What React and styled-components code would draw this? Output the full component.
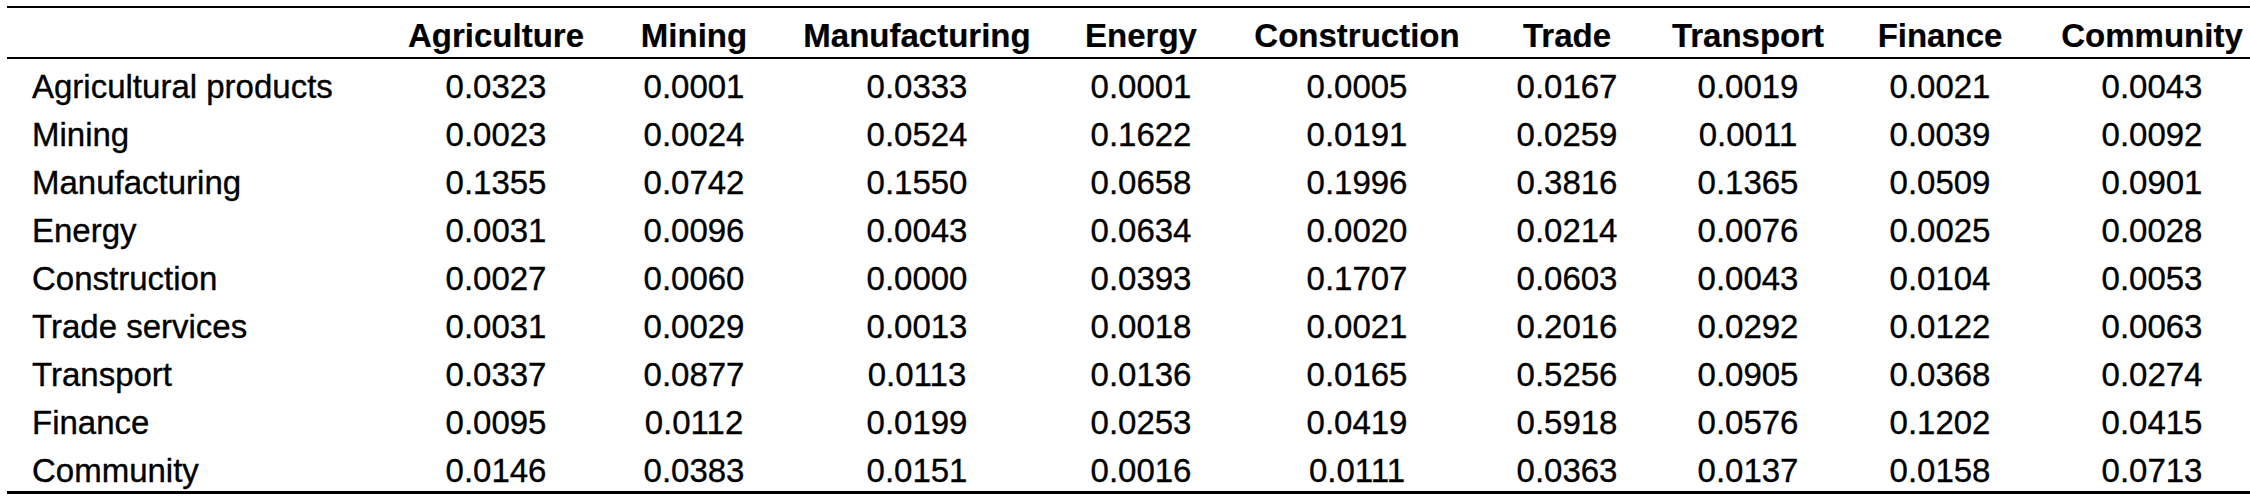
import React from 'react';
import styled, { createGlobalStyle } from 'styled-components';

const GlobalStyle = createGlobalStyle`
  html, body {
    margin: 0;
    padding: 0;
    background: #fff;
    overflow: hidden;
  }
  body {
    font-family: 'Liberation Sans', Arial, Helvetica, sans-serif;
    color: #000;
  }
`;

const Table = styled.div`
  margin: 6px 0 0 7px;
  width: 2274px;
  border-top: 2px solid #000;
  border-bottom: 3px solid #000;
`;

const Row = styled.div`
  display: grid;
  grid-template-columns: 368px 242px 154px 292px 156px 276px 144px 218px 166px 258px;
  height: ${(p) => (p.$head ? '49px' : '48px')};
  border-bottom: ${(p) => (p.$head ? '2px solid #000' : 'none')};
  font-size: 33px;
  line-height: 36px;
  font-weight: ${(p) => (p.$head ? 700 : 400)};
  -webkit-text-stroke: ${(p) => (p.$head ? '0.2px' : '0.35px')} #000;
`;

const Cell = styled.div`
  padding-top: ${(p) => (p.$head ? '9.5px' : '10px')};
  padding-left: ${(p) => (p.$label ? '25px' : '0')};
  text-align: ${(p) => (p.$label ? 'left' : 'center')};
  white-space: nowrap;
`;

const columns = [
    'Agriculture', 'Mining', 'Manufacturing', 'Energy', 'Construction',
    'Trade', 'Transport', 'Finance', 'Community',
];

const rows = [
    ['Agricultural products', '0.0323', '0.0001', '0.0333', '0.0001', '0.0005', '0.0167', '0.0019', '0.0021', '0.0043'],
    ['Mining', '0.0023', '0.0024', '0.0524', '0.1622', '0.0191', '0.0259', '0.0011', '0.0039', '0.0092'],
    ['Manufacturing', '0.1355', '0.0742', '0.1550', '0.0658', '0.1996', '0.3816', '0.1365', '0.0509', '0.0901'],
    ['Energy', '0.0031', '0.0096', '0.0043', '0.0634', '0.0020', '0.0214', '0.0076', '0.0025', '0.0028'],
    ['Construction', '0.0027', '0.0060', '0.0000', '0.0393', '0.1707', '0.0603', '0.0043', '0.0104', '0.0053'],
    ['Trade services', '0.0031', '0.0029', '0.0013', '0.0018', '0.0021', '0.2016', '0.0292', '0.0122', '0.0063'],
    ['Transport', '0.0337', '0.0877', '0.0113', '0.0136', '0.0165', '0.5256', '0.0905', '0.0368', '0.0274'],
    ['Finance', '0.0095', '0.0112', '0.0199', '0.0253', '0.0419', '0.5918', '0.0576', '0.1202', '0.0415'],
    ['Community', '0.0146', '0.0383', '0.0151', '0.0016', '0.0111', '0.0363', '0.0137', '0.0158', '0.0713'],
];

const App = () => (
    <>
        <GlobalStyle />
        <Table>
            <Row $head>
                <Cell $head $label />
                {columns.map((c) => (
                    <Cell $head key={c}>{c}</Cell>
                ))}
            </Row>
            {rows.map(([label, ...values]) => (
                <Row key={label}>
                    <Cell $label>{label}</Cell>
                    {values.map((v, i) => (
                        <Cell key={i}>{v}</Cell>
                    ))}
                </Row>
            ))}
        </Table>
    </>
);

export default App;
